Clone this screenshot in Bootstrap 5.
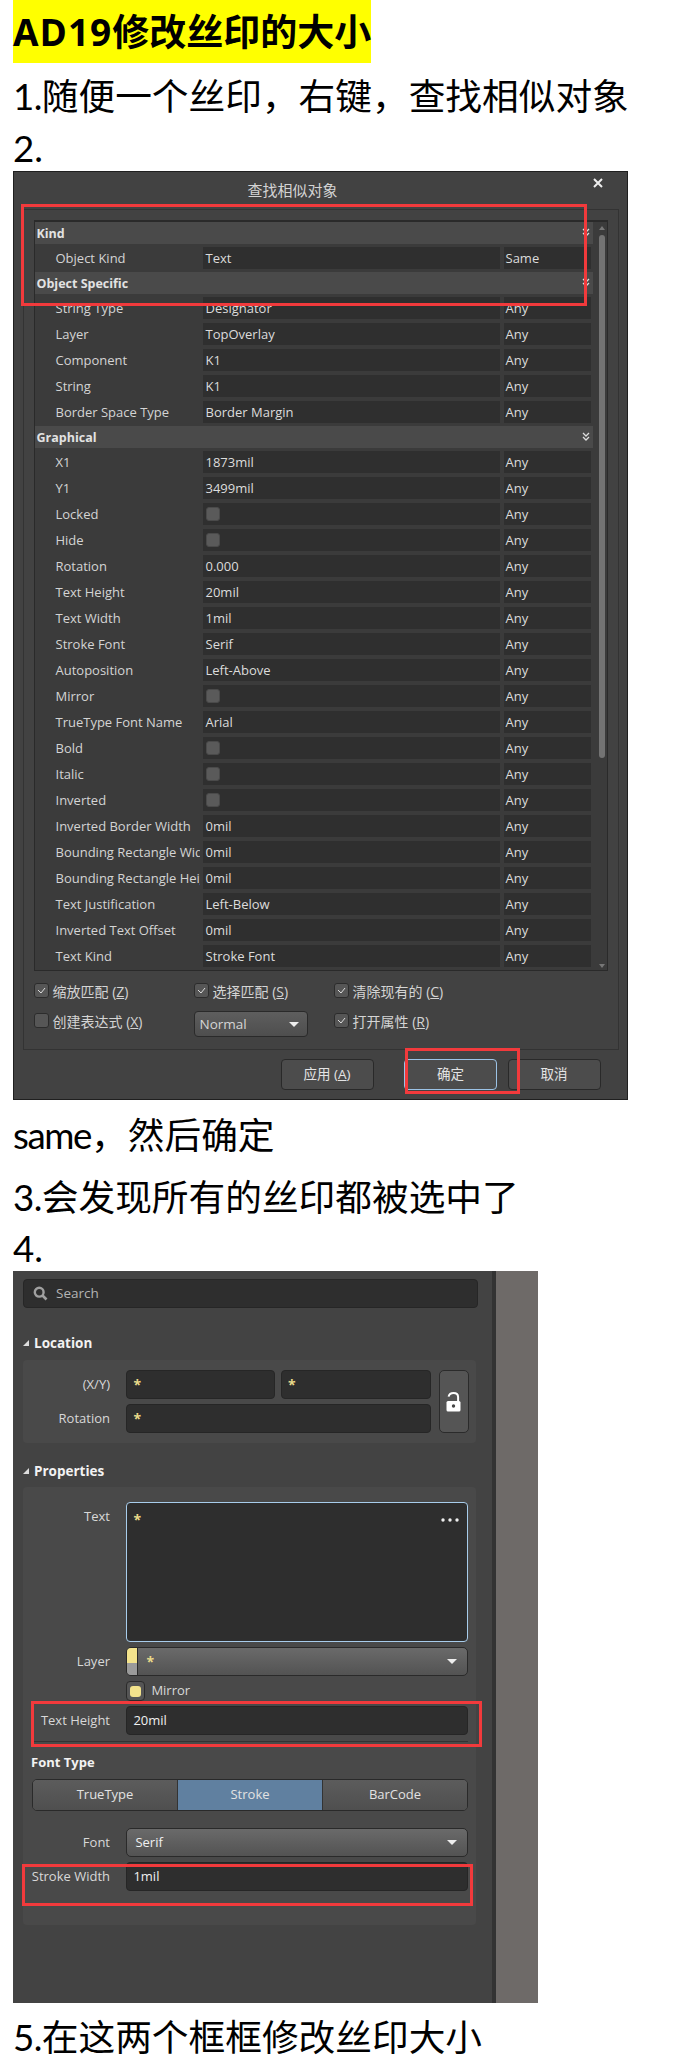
<!doctype html>
<html lang="zh">
<head>
<meta charset="utf-8">
<title>AD19修改丝印的大小</title>
<link href="https://cdn.jsdelivr.net/npm/bootstrap@5.3.0/dist/css/bootstrap.min.css" rel="stylesheet">
<style>
body{background:#fff;color:#000;font-family:"Open Sans","Noto Sans CJK SC",sans-serif;width:692px;height:2067px;overflow:hidden}
.doc{padding-left:13px}
.doc-title{display:block;width:358px;height:63px;line-height:63px;background:#ff0;font-size:37px;font-weight:700;margin:0;white-space:nowrap;font-family:"Open Sans","Noto Sans CJK SC",sans-serif}
.latin-wide{letter-spacing:1px}
.doc-line{font-family:Lato,"Noto Sans CJK SC",sans-serif;font-size:36.7px;line-height:44px;height:44px;margin:0;white-space:nowrap}
.num-tight{letter-spacing:-.6px}
.latin-tight{letter-spacing:-1.4px}
.mt-11{margin-top:11px}.mt-8{margin-top:8px}.mt-13{margin-top:13px}.mt-12{margin-top:12px}.mt-18{margin-top:18px}.mt-7{margin-top:7px}
.mb-1px{margin-bottom:1px}
.shot-frame{position:relative;font-family:"Open Sans","Noto Sans CJK SC",sans-serif;font-size:13px}
.redbox{position:absolute;border:3px solid #f23a3c;pointer-events:none}
/* dialog */
.dlg{width:615px;height:929px;background:#424242;border:1px solid #1f1f1f;color:#d4d4d4;box-sizing:border-box}
.dlg-title{height:37px;font-size:15px;padding-top:7px;text-align:center;padding-right:56px;position:relative}
.dlg-x{position:absolute;left:578px;top:5px}
.dlg-body{margin:0 8.5px 0 9px;height:841px;border:1px solid #333;padding:10px 9.5px 0}
.ptable{height:751px;border:1px solid #2a2a2a;border-top-width:2px;background:#3b3b3b;overflow:hidden}
.prows{width:558px}
.pgroup{height:22px;line-height:21px;margin:3px 0;padding-left:2px;padding-right:3px;background:#4a4a4a;font-weight:700;color:#e2e2e2;font-size:12.5px}
.pgroup:first-child{margin-top:0}
.prow{height:22px;margin-bottom:4px}
.prow.tail{margin-bottom:0}
.plabel{width:165.5px;margin-right:3px;padding-left:21px;padding-right:0;white-space:nowrap;overflow:hidden;line-height:22px;flex:none}
.pval{width:296.5px;margin-right:4px;background:#2f2f2f;padding-left:2.5px;line-height:22px;flex:none;color:#dcdcdc}
.pany{width:87px;background:#2f2f2f;padding-left:2px;line-height:22px;flex:none;color:#dcdcdc}
.pbox{display:block;width:14px;height:14px;margin:4px 0 0 .5px;background:#5a5a5a;border:1px solid #4a4a4a;border-radius:3px}
.pscroll{width:6px;margin-left:6px;flex:none;padding-top:4px}
.pthumb{height:523px;margin-top:5px;background:#737373;border-radius:3px}
.dlg-opts{padding-top:12px}
.optrow{height:30px}
.optrow2{height:26px}
.ck{width:15px;height:15px;background:#565656;border:1px solid #2c2c2c;border-radius:3px;flex:none}
.optlabel{margin-left:4px;margin-top:1px;font-size:14px;line-height:16px;white-space:nowrap}
.c1{width:160px}.c2{width:140px}
.ddl{width:114px;height:26px;background:linear-gradient(#5e5e5e,#4e4e4e);border:1px solid #2a2a2a;border-radius:4px;padding-left:5px;font-size:13.5px;margin-top:-2px}
.caret{width:0;height:0;border-left:5px solid transparent;border-right:5px solid transparent;border-top:5px solid #eee;flex:none}
.dlg-foot{padding-top:9px;height:40px}
.dbtn{width:93px;height:31px;padding:0;font-size:13.5px;color:#e4e4e4;background:#4c4c4c;border:1px solid #292929;border-radius:4px;line-height:27px}
.dbtn:hover{color:#e4e4e4;background:#4c4c4c}
.dbtn.on{border-color:#9cc3e6}
.btn-apply{margin-left:266.5px}.btn-ok{margin-left:30.5px}.btn-cancel{margin-left:10.5px}
/* panel */
.panel{width:525px;height:732px;background:#434343;color:#d8d8d8}
.pmain{width:476px;padding:8px 0 0 10px}
.pstrip{width:4px;background:#333;margin-left:3px}
.pside{flex:1;background:#6e6a68}
.psearch{width:455px;height:29px;background:#2e2e2e;border:1px solid #262626;border-radius:4px;padding-left:9px;color:#b4b4b4;font-size:13.5px}
.psearch svg{flex:none}
.phead{height:20px;line-height:20px;font-weight:700;color:#f2f2f2;font-size:13.5px}
.phead-loc{margin-top:25px}.phead-prop{margin-top:18px}
.tri{width:0;height:0;border-bottom:6px solid #ddd;border-left:6px solid transparent;margin-right:5px;flex:none}
.pcard{width:453px;background:#494949;border-radius:4px}
.loc{height:83px;padding-top:10px;margin-top:7px}
.props{height:438px;padding-top:15px;margin-top:6px}
.flabel{width:87px;text-align:right;margin-right:16.4px;flex:none;line-height:29px;white-space:nowrap}
.finput{height:29px;background:#2e2e2e;border:1px solid #262626;border-radius:4px;line-height:27px;padding-left:6px;color:#f0f0f0}
.fw{width:341.6px}
.star{color:#e9d98a;font-weight:700;font-size:14px;padding-left:6px}
.locgrid{display:grid;grid-template-columns:148.6px 150px;grid-template-rows:29px 29px;gap:5px 6px}
.span2{grid-column:span 2}
.lockbtn{width:30px;height:63px;margin-left:8px;background:#555;border:1px solid #2b2b2b;border-radius:5px}
.farea{height:140px;background:#2e2e2e;border:1px solid #a8cdec;border-radius:4px;padding:7px 8px 0 0;line-height:20px}
.fselect{height:29px;background:linear-gradient(#6a6a6a,#535353);border:1px solid #2a2a2a;border-radius:5px;padding-right:10px;color:#f0f0f0}
.swatch{width:11px;height:27px;flex:none;border-right:1px solid #2a2a2a;background:linear-gradient(#f3e38c 0 15px,#9a9a9a 15px);border-radius:4px 0 0 4px}
.mirbox{width:19px;height:20px;background:#555;border:1px solid #2a2a2a;border-radius:4px;margin-right:6px}
.mirdot{width:11px;height:11px;background:#f3e38c;border-radius:3px}
.sep{height:1px;width:434px;margin:6px 0 0 11px;background:#333}
.fonthead{margin:10px 0 0 8px;height:20px;line-height:20px;font-weight:700;color:#f2f2f2;font-size:13px}
.segs{width:436px;height:32px;margin:7px 0 0 9px;border:1px solid #2a2a2a;border-radius:5px;overflow:hidden;background:#555}
.seg{flex:1;text-align:center;line-height:29px;border-right:1px solid #333;color:#e2e2e2;background:linear-gradient(#5c5c5c,#4f4f4f)}
.seg:last-child{border-right:0}
.seg.on{background:#6080a0}
.m5{margin-top:5px}.m17{margin-top:17px}
.rb-a{left:8px;top:33px;width:566px;height:102px}
.rb-b{left:392px;top:877px;width:115px;height:46px}
.rb-c{left:18px;top:430px;width:451px;height:46px}
.rb-d{left:9px;top:593px;width:451px;height:42px}
.frame-2{margin-top:1px}
.sb-down{margin-top:206px}
</style>
</head>
<body>
<div class="doc">
  <h1 class="doc-title"><span class="latin-wide">AD19</span>修改丝印的大小</h1>
  <p class="doc-line mt-11"><span class="num-tight">1.</span>随便一个丝印，右键，查找相似对象</p>
  <p class="doc-line mt-8 mb-1px">2.</p>

  <div class="shot-frame">
    <div class="dlg">
      <div class="dlg-title">查找相似对象
        <svg class="dlg-x" width="12" height="12" viewBox="0 0 12 12"><path d="M2 2l8 8M10 2l-8 8" stroke="#eee" stroke-width="2" fill="none"/></svg>
      </div>
      <div class="dlg-body">
        <div class="ptable d-flex">
          <div class="prows" id="rows"></div>
          <div class="pscroll">
            <svg class="d-block" width="6" height="4" viewBox="0 0 6 4"><path d="M3 0l3 4H0z" fill="#777"/></svg>
            <div class="pthumb"></div>
            <svg class="d-block sb-down" width="6" height="4" viewBox="0 0 6 4"><path d="M0 0h6L3 4z" fill="#777"/></svg>
          </div>
        </div>
        <div class="dlg-opts">
          <div class="d-flex optrow">
            <div class="c1 d-flex"><span class="ck d-flex align-items-center justify-content-center"><svg width="9" height="8" viewBox="0 0 9 8"><path d="M1 3l3 3 4-5" stroke="#ddd" fill="none"/></svg></span><span class="optlabel">缩放匹配 (<u>Z</u>)</span></div>
            <div class="c2 d-flex"><span class="ck d-flex align-items-center justify-content-center"><svg width="9" height="8" viewBox="0 0 9 8"><path d="M1 3l3 3 4-5" stroke="#ddd" fill="none"/></svg></span><span class="optlabel">选择匹配 (<u>S</u>)</span></div>
            <div class="d-flex"><span class="ck d-flex align-items-center justify-content-center"><svg width="9" height="8" viewBox="0 0 9 8"><path d="M1 3l3 3 4-5" stroke="#ddd" fill="none"/></svg></span><span class="optlabel">清除现有的 (<u>C</u>)</span></div>
          </div>
          <div class="d-flex optrow2">
            <div class="c1 d-flex"><span class="ck"></span><span class="optlabel">创建表达式 (<u>X</u>)</span></div>
            <div class="c2"><div class="ddl d-flex align-items-center justify-content-between pe-2">Normal<span class="caret"></span></div></div>
            <div class="d-flex"><span class="ck d-flex align-items-center justify-content-center"><svg width="9" height="8" viewBox="0 0 9 8"><path d="M1 3l3 3 4-5" stroke="#ddd" fill="none"/></svg></span><span class="optlabel">打开属性 (<u>R</u>)</span></div>
          </div>
        </div>
      </div>
      <div class="dlg-foot d-flex">
        <button type="button" class="btn dbtn btn-apply">应用 (<u>A</u>)</button>
        <button type="button" class="btn dbtn on btn-ok">确定</button>
        <button type="button" class="btn dbtn btn-cancel">取消</button>
      </div>
    </div>
    <div class="redbox rb-a"></div>
    <div class="redbox rb-b"></div>
  </div>

  <p class="doc-line mt-13"><span class="latin-tight">same</span>，然后确定</p>
  <p class="doc-line mt-18"><span class="num-tight">3.</span>会发现所有的丝印都被选中了</p>
  <p class="doc-line mt-7">4.</p>

  <div class="shot-frame frame-2">
    <div class="panel d-flex">
      <div class="pmain">
        <div class="psearch d-flex align-items-center">
          <svg width="15" height="15" viewBox="0 0 15 15" class="me-2"><circle cx="6.2" cy="6.2" r="4.4" stroke="#a0a0a0" stroke-width="2.4" fill="none"/><path d="M9.5 9.5l4 4" stroke="#a0a0a0" stroke-width="2.6"/></svg>
          <span>Search</span>
        </div>
        <div class="phead phead-loc d-flex align-items-center"><span class="tri"></span>Location</div>
        <div class="pcard loc d-flex">
          <div>
            <div class="flabel">(X/Y)</div>
            <div class="flabel m5">Rotation</div>
          </div>
          <div class="locgrid">
            <div class="finput star">*</div>
            <div class="finput star">*</div>
            <div class="finput star span2">*</div>
          </div>
          <div class="lockbtn d-flex align-items-center justify-content-center">
            <svg width="15" height="20" viewBox="0 0 15 20"><path d="M2.6 4.6C3.2 2 5 1 7.5 1s4.6 1.4 4.6 4v5.5" stroke="#fff" stroke-width="2" fill="none"/><rect x="0.5" y="9" width="14" height="10.5" rx="1.5" fill="#fff"/><circle cx="7.5" cy="14" r="1.7" fill="#444"/></svg>
          </div>
        </div>
        <div class="phead phead-prop d-flex align-items-center"><span class="tri"></span>Properties</div>
        <div class="pcard props">
          <div class="d-flex">
            <div class="flabel">Text</div>
            <div class="farea fw d-flex justify-content-between">
              <span class="star">*</span>
              <svg width="18" height="4" viewBox="0 0 18 4" class="mt-2"><circle cx="2" cy="2" r="1.7" fill="#eee"/><circle cx="9" cy="2" r="1.7" fill="#eee"/><circle cx="16" cy="2" r="1.7" fill="#eee"/></svg>
            </div>
          </div>
          <div class="d-flex m5">
            <div class="flabel">Layer</div>
            <div class="fselect fw d-flex align-items-center justify-content-between"><span class="d-flex align-items-center"><span class="swatch"></span><span class="star ps-2">*</span></span><span class="caret"></span></div>
          </div>
          <div class="d-flex m5">
            <div class="flabel"></div>
            <div class="d-flex align-items-center"><span class="mirbox d-flex align-items-center justify-content-center"><span class="mirdot"></span></span><span>Mirror</span></div>
          </div>
          <div class="d-flex m5">
            <div class="flabel">Text Height</div>
            <div class="finput fw">20mil</div>
          </div>
          <div class="sep"></div>
          <div class="fonthead">Font Type</div>
          <div class="segs d-flex">
            <div class="seg">TrueType</div>
            <div class="seg on">Stroke</div>
            <div class="seg">BarCode</div>
          </div>
          <div class="d-flex m17">
            <div class="flabel">Font</div>
            <div class="fselect fw d-flex align-items-center justify-content-between ps-2">Serif<span class="caret"></span></div>
          </div>
          <div class="d-flex m5">
            <div class="flabel">Stroke Width</div>
            <div class="finput fw">1mil</div>
          </div>
        </div>
      </div>
      <div class="pstrip"></div>
      <div class="pside"></div>
    </div>
    <div class="redbox rb-c"></div>
    <div class="redbox rb-d"></div>
  </div>

  <p class="doc-line mt-12"><span class="num-tight">5.</span>在这两个框框修改丝印大小</p>
</div>

<script src="https://cdn.jsdelivr.net/npm/bootstrap@5.3.0/dist/js/bootstrap.bundle.min.js"></script>
<script>
var data=[
['g','Kind'],
['Object Kind','Text','Same',1],
['g','Object Specific'],
['String Type','Designator','Any'],['Layer','TopOverlay','Any'],['Component','K1','Any'],['String','K1','Any'],['Border Space Type','Border Margin','Any',1],
['g','Graphical'],
['X1','1873mil','Any'],['Y1','3499mil','Any'],['Locked','#','Any'],['Hide','#','Any'],['Rotation','0.000','Any'],['Text Height','20mil','Any'],['Text Width','1mil','Any'],['Stroke Font','Serif','Any'],['Autoposition','Left-Above','Any'],['Mirror','#','Any'],['TrueType Font Name','Arial','Any'],['Bold','#','Any'],['Italic','#','Any'],['Inverted','#','Any'],['Inverted Border Width','0mil','Any'],['Bounding Rectangle Width','0mil','Any'],['Bounding Rectangle Height','0mil','Any'],['Text Justification','Left-Below','Any'],['Inverted Text Offset','0mil','Any'],['Text Kind','Stroke Font','Any',1]];
var chev='<svg width="8" height="10" viewBox="0 0 8 10"><path d="M1 1l3 3 3-3M1 5l3 3 3-3" stroke="#ddd" stroke-width="1.3" fill="none"/></svg>';
document.getElementById('rows').innerHTML=data.map(function(r){
 if(r[0]==='g')return '<div class="pgroup d-flex justify-content-between align-items-center"><span>'+r[1]+'</span>'+chev+'</div>';
 return '<div class="prow d-flex'+(r[3]?' tail':'')+'"><div class="plabel">'+r[0]+'</div><div class="pval">'+(r[1]==='#'?'<span class="pbox"></span>':r[1])+'</div><div class="pany">'+r[2]+'</div></div>';
}).join('');
</script>
</body>
</html>
